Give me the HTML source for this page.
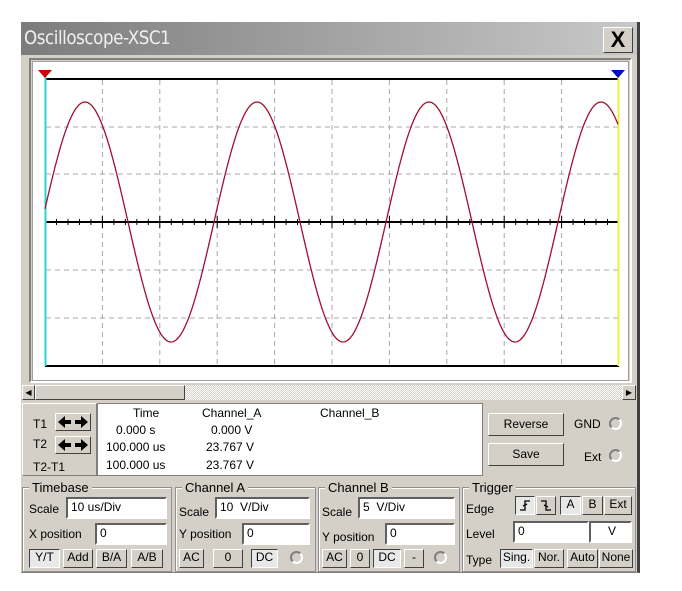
<!DOCTYPE html>
<html><head><meta charset="utf-8"><style>
*{margin:0;padding:0;box-sizing:border-box}
body{width:682px;height:591px;background:#fff;position:relative;overflow:hidden;font-family:"Liberation Sans",sans-serif;font-size:12px;color:#000}
.a{position:absolute}
.win{left:21px;top:22px;width:619px;height:551px;background:#d4d0c8;border-right:3px solid #404040;border-bottom:1px solid #808080}
.title{left:21px;top:22px;width:616px;height:33px;background:linear-gradient(90deg,#7c7c7c,#c8c8c8);color:#f0f0f0;font-size:19px;font-weight:bold;line-height:33px;padding-left:3px;letter-spacing:-0.5px;transform-origin:0 0}
.x{left:603px;top:27px;width:30px;height:26px;background:#d4d0c8;border:1px solid;border-color:#fff #404040 #404040 #fff;font-size:22px;text-align:center;line-height:24px;font-weight:bold}
.btn{position:absolute;background:#d4d0c8;border:1px solid;border-color:#fff #404040 #404040 #fff;text-align:center;font-size:12px}
.btn.dn{border-color:#404040 #fff #fff #404040;background:#e8e8e8}
.inp{position:absolute;background:#fff;border:2px solid;border-color:#606060 #fff #fff #606060;font-size:12px;padding-left:3px;line-height:17px}
.grp{position:absolute;border:1px solid #909090;box-shadow:inset 1px 1px 0 #fff}
.gl{position:absolute;top:-8px;left:6px;background:#d4d0c8;padding:0 3px;font-size:13px}
.rad{position:absolute;width:13px;height:13px;border-radius:50%;border:2px solid;border-color:#808080 #fff #fff #808080;background:#d4d0c8}
</style></head><body>
<div class="a win"></div>
<div class="a title"><span style="display:inline-block;transform:scaleX(0.88);transform-origin:0 50%;font-weight:normal;font-family:'DejaVu Sans',sans-serif;font-size:19px">Oscilloscope-XSC1</span></div>
<div class="a x">X</div>
<div class="a" style="left:29px;top:58px;width:603px;height:325px;border:2px solid;border-color:#808080 #fff #fff #808080"></div>
<div class="a" style="left:32px;top:61px;width:597px;height:320px;background:#fff;border:1px solid #a0a0a0"></div>
<svg class="a" style="left:0;top:0" width="682" height="400">
<g stroke="#a8a8a8" stroke-dasharray="5,4" stroke-width="1" id="grid"></g>
<line x1="45" y1="79" x2="619" y2="79" stroke="#000" stroke-width="2"/>
<line x1="45" y1="366" x2="619" y2="366" stroke="#000" stroke-width="2"/>
<line x1="45" y1="222" x2="619" y2="222" stroke="#000" stroke-width="2"/>
<g stroke="#000" id="ticks"></g>
<line x1="45.5" y1="75" x2="45.5" y2="366" stroke="#2ad4d4" stroke-width="2"/>
<line x1="618.5" y1="75" x2="618.5" y2="366" stroke="#f0f040" stroke-width="2"/>
<polygon points="38,70 52,70 45,78" fill="#d00000"/>
<polygon points="611,70 625,70 618,78" fill="#0010c0"/>
<path id="w" fill="none" stroke="#a01030" stroke-width="1.3"/>
</svg>
<script>
var g=document.getElementById('grid'),t=document.getElementById('ticks'),h='',k='';
for(var i=1;i<10;i++){var x=45+i*57.4;h+='<line x1="'+x+'" y1="80" x2="'+x+'" y2="365"/>';}
[127,174,270,318].forEach(function(y){h+='<line x1="46" y1="'+y+'" x2="618" y2="'+y+'"/>';});
g.innerHTML=h;
for(var i=0;i<=50;i++){var x=45+i*11.48;var L=(i%5==0)?6:3;k+='<line x1="'+x+'" y1="'+(222-L)+'" x2="'+x+'" y2="'+(222+L)+'"/>';}
t.innerHTML=k;
var d='';for(var x=45;x<=618;x+=1){var y=222-120*Math.sin(2*Math.PI*(x-42)/172);d+=(x==45?'M':'L')+x+' '+y.toFixed(1);}
document.getElementById('w').setAttribute('d',d);
</script>
<div class="a" style="left:22px;top:385px;width:614px;height:15px;background:repeating-conic-gradient(#fff 0 25%,#d4d0c8 0 50%) 0 0/2px 2px"></div>
<div class="btn" style="left:22px;top:385px;width:13px;height:15px;font-size:8px;line-height:13px">◀</div>
<div class="btn" style="left:35px;top:385px;width:150px;height:15px"></div>
<div class="btn" style="left:622px;top:385px;width:14px;height:15px;font-size:8px;line-height:13px">▶</div>
<div class="a" style="left:22px;top:403px;width:75px;height:73px;border:1px solid;border-color:#fff #808080 #808080 #fff"></div>
<div class="a" style="left:33px;top:417px">T1</div>
<div class="a" style="left:33px;top:437px">T2</div>
<div class="a" style="left:33px;top:460px">T2-T1</div>
<div class="btn" style="left:55px;top:413px;width:36px;height:18px"><svg width="34" height="16"><path d="M2 8L9 2V6H15V10H9V14Z M32 8L25 2V6H19V10H25V14Z" fill="#000"/></svg></div>
<div class="btn" style="left:55px;top:436px;width:36px;height:18px"><svg width="34" height="16"><path d="M2 8L9 2V6H15V10H9V14Z M32 8L25 2V6H19V10H25V14Z" fill="#000"/></svg></div>
<div class="a" style="left:97px;top:403px;width:386px;height:73px;background:#fff;border:1px solid #808080"></div>
<div class="a" style="left:133px;top:406px">Time</div>
<div class="a" style="left:202px;top:406px">Channel_A</div>
<div class="a" style="left:320px;top:406px">Channel_B</div>
<div class="a" style="left:116px;top:423px">0.000 s</div>
<div class="a" style="left:106px;top:440px">100.000 us</div>
<div class="a" style="left:106px;top:458px">100.000 us</div>
<div class="a" style="left:211px;top:423px">0.000 V</div>
<div class="a" style="left:206px;top:440px">23.767 V</div>
<div class="a" style="left:206px;top:458px">23.767 V</div>
<div class="btn" style="left:488px;top:413px;width:76px;height:23px;line-height:21px">Reverse</div>
<div class="btn" style="left:488px;top:443px;width:76px;height:23px;line-height:21px">Save</div>
<div class="a" style="left:574px;top:417px">GND</div>
<div class="rad" style="left:609px;top:417px"></div>
<div class="a" style="left:584px;top:450px">Ext</div>
<div class="rad" style="left:609px;top:449px"></div>
<div class="grp" style="left:22px;top:487px;width:150px;height:85px"><span class="gl">Timebase</span></div>
<div class="grp" style="left:175px;top:487px;width:141px;height:85px"><span class="gl">Channel A</span></div>
<div class="grp" style="left:318px;top:487px;width:142px;height:85px"><span class="gl">Channel B</span></div>
<div class="grp" style="left:462px;top:487px;width:174px;height:85px"><span class="gl">Trigger</span></div>
<div class="a" style="left:29px;top:502px">Scale</div>
<div class="inp" style="left:66px;top:497px;width:101px;height:22px">10 us/Div</div>
<div class="a" style="left:29px;top:527px">X position</div>
<div class="inp" style="left:95px;top:523px;width:72px;height:22px">0</div>
<div class="btn dn" style="left:29px;top:549px;width:31px;height:19px">Y/T</div>
<div class="btn" style="left:63px;top:549px;width:30px;height:19px">Add</div>
<div class="btn" style="left:96px;top:549px;width:31px;height:19px">B/A</div>
<div class="btn" style="left:131px;top:549px;width:32px;height:19px">A/B</div>
<div class="a" style="left:179px;top:505px">Scale</div>
<div class="inp" style="left:215px;top:497px;width:95px;height:22px">10&nbsp; V/Div</div>
<div class="a" style="left:179px;top:527px">Y position</div>
<div class="inp" style="left:242px;top:523px;width:68px;height:22px">0</div>
<div class="btn" style="left:179px;top:549px;width:25px;height:19px">AC</div>
<div class="btn" style="left:213px;top:549px;width:30px;height:19px">0</div>
<div class="btn dn" style="left:251px;top:549px;width:27px;height:19px">DC</div>
<div class="rad" style="left:290px;top:551px"></div>
<div class="a" style="left:322px;top:505px">Scale</div>
<div class="inp" style="left:358px;top:497px;width:97px;height:22px">5&nbsp; V/Div</div>
<div class="a" style="left:322px;top:530px">Y position</div>
<div class="inp" style="left:385px;top:523px;width:70px;height:22px">0</div>
<div class="btn" style="left:322px;top:549px;width:25px;height:19px">AC</div>
<div class="btn" style="left:350px;top:549px;width:20px;height:19px">0</div>
<div class="btn dn" style="left:373px;top:549px;width:28px;height:19px">DC</div>
<div class="btn" style="left:404px;top:549px;width:20px;height:19px">-</div>
<div class="rad" style="left:434px;top:551px"></div>
<div class="a" style="left:466px;top:502px">Edge</div>
<div class="btn dn" style="left:515px;top:496px;width:20px;height:19px"><svg width="18" height="17"><path d="M4 13H9V4H14M7 9L11 7" stroke="#000" fill="none" stroke-width="1.3"/></svg></div>
<div class="btn" style="left:536px;top:496px;width:20px;height:19px"><svg width="18" height="17"><path d="M4 4H9V13H14M7 8L11 10" stroke="#000" fill="none" stroke-width="1.3"/></svg></div>
<div class="btn dn" style="left:560px;top:496px;width:21px;height:19px">A</div>
<div class="btn" style="left:582px;top:496px;width:21px;height:19px">B</div>
<div class="btn" style="left:604px;top:496px;width:28px;height:19px">Ext</div>
<div class="a" style="left:466px;top:527px">Level</div>
<div class="inp" style="left:513px;top:521px;width:76px;height:22px">0</div>
<div class="inp" style="left:589px;top:521px;width:43px;height:22px;text-align:center">V</div>
<div class="a" style="left:466px;top:553px">Type</div>
<div class="btn dn" style="left:500px;top:549px;width:33px;height:19px">Sing.</div>
<div class="btn" style="left:534px;top:549px;width:30px;height:19px">Nor.</div>
<div class="btn" style="left:567px;top:549px;width:31px;height:19px">Auto</div>
<div class="btn" style="left:599px;top:549px;width:34px;height:19px">None</div>
</body></html>
